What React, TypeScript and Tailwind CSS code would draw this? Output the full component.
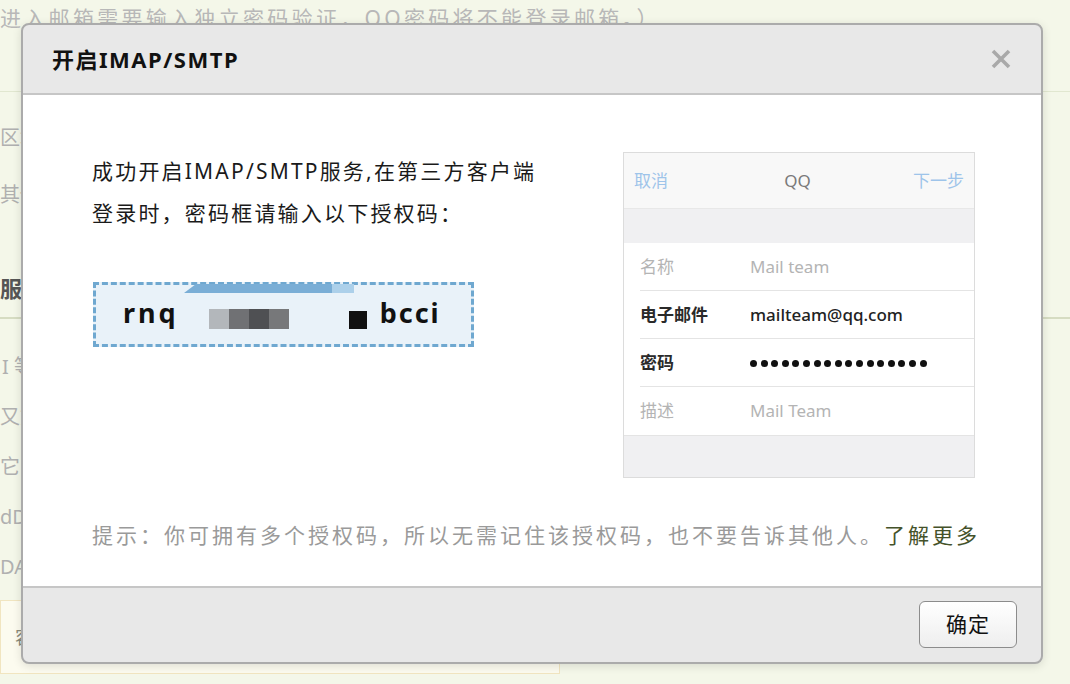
const font = "font-['Noto_Sans','Noto_Sans_CJK_SC',sans-serif]";

const rows = [
  { label: '名称', value: 'Mail team', strong: false },
  { label: '电子邮件', value: 'mailteam@qq.com', strong: true },
  { label: '密码', value: '', strong: true },
  { label: '描述', value: 'Mail Team', strong: false },
];

function PhonePreview() {
  return (
    <div className="mt-[2px] w-[352px] h-[326px] border border-[#dcdcdc] bg-[#f0f0f2] flex flex-col text-[17px]">
      {/* top bar */}
      <div className="h-[56px] bg-[#f8f8f8] border-b border-[#e8e8e8] flex items-center justify-between px-[10px]">
        <span className="text-[#9ec4ea]">取消</span>
        <span className="text-[#7a7a7a] pl-[14px]">QQ</span>
        <span className="text-[#9ec4ea]">下一步</span>
      </div>
      <div className="h-[34px]" />
      <div className="bg-white pl-[16px]">
        {rows.map((r, i) => (
          <div
            key={r.label}
            className={`h-[48px] flex items-center ${i < rows.length - 1 ? 'border-b border-[#e4e4e4]' : ''}`}
          >
            <span className={`w-[110px] ${r.strong ? 'text-[#2a2a2a] font-semibold' : 'text-[#b4b4b4]'}`}>
              {r.label}
            </span>
            {r.label === '密码' ? (
              <div className="flex gap-[3.6px] mt-[2px]">
                {Array.from({ length: 17 }).map((_, k) => (
                  <div key={k} className="w-[7px] h-[7px] rounded-full bg-[#111]" />
                ))}
              </div>
            ) : (
              <span className={r.strong ? 'text-[#222] font-medium' : 'text-[#b4b4b4]'}>{r.value}</span>
            )}
          </div>
        ))}
      </div>
      <div className="flex-1 border-t border-[#e4e4e4]" />
    </div>
  );
}

function CodeBox() {
  const blur = ['bg-[#b3b7bb]', 'bg-[#707174]', 'bg-[#4f5053]', 'bg-[#77787a]'];
  return (
    <div className="relative mt-[48px] ml-[1px] w-[381px] h-[65px] border-[3px] border-dashed border-[#6fa8d0] bg-[#e9f2f9] flex items-center pl-[27px]">
      {/* cut-off highlight strip along the top */}
      <div className="absolute top-[-1px] left-[88px] w-[150px] h-[9px] bg-[#7aaed6] [clip-path:polygon(8%_0,100%_0,100%_100%,0_100%)]" />
      <div className="absolute top-[-1px] left-[236px] w-[22px] h-[9px] bg-[#acd0ea]" />
      <span className="text-[27px] font-bold tracking-[3px] text-[#111] leading-none pb-[4px]">rnq</span>
      <div className="ml-[30px] mt-[8px] flex">
        {blur.map((c, i) => (
          <div key={i} className={`w-[20px] h-[20px] ${c}`} />
        ))}
      </div>
      <div className="ml-[60px] mt-[10px] w-[18px] h-[18px] bg-[#111]" />
      <span className="ml-[13px] text-[27px] font-bold tracking-[2px] text-[#111] leading-none pb-[4px]">bcci</span>
    </div>
  );
}

function Dialog() {
  return (
    <div className="absolute left-[21px] top-[23px] w-[1022px] h-[641px] border-2 border-[#ababab] rounded-[8px] overflow-hidden bg-[#e8e8e8] shadow-[0_2px_10px_rgba(0,0,0,0.12)] flex flex-col">
      {/* Header */}
      <div className="h-[70px] border-b-2 border-[#c6c6c6] flex items-center justify-between pl-[29px] pr-[29px]">
        <span className="text-[22px] font-bold tracking-[1.5px] text-[#111]">开启IMAP/SMTP</span>
        <svg width="20" height="20" viewBox="0 0 20 20" className="mr-[1px]">
          <path d="M2 2 L18 18 M18 2 L2 18" stroke="#a9a9a9" strokeWidth="3.6" strokeLinecap="butt" />
        </svg>
      </div>

      {/* Body */}
      <div className="h-[491px] bg-white pl-[69px] pr-[40px] pt-[55px]">
        <div className="flex justify-between pr-[26px]">
          <div>
            <p className="text-[21px] leading-[42px] tracking-[2.2px] text-[#1a1a1a]">
              成功开启IMAP/SMTP服务,在第三方客户端
              <br />
              登录时，密码框请输入以下授权码：
            </p>
            <CodeBox />
          </div>
          <PhonePreview />
        </div>
        <p className="mt-[41px] whitespace-nowrap text-[21px] leading-[32px] tracking-[3px] text-[#9a9a9a]">
          提示：你可拥有多个授权码，所以无需记住该授权码，也不要告诉其他人。
          <span className="text-[#44522a]">了解更多</span>
        </p>
      </div>

      {/* Footer */}
      <div className="flex-1 border-t-2 border-[#c6c6c6] flex justify-end items-start pt-[13px] pr-[24px]">
        <button className="w-[98px] h-[47px] rounded-[6px] border border-[#8c8c8c] bg-gradient-to-b from-white to-[#eeeeee] text-[21px] tracking-[1px] text-[#111]">
          确定
        </button>
      </div>
    </div>
  );
}

export default function App() {
  const side = [
    { t: '区域', mt: 'mt-[21px]', cls: 'text-[#b0b0b0]' },
    { t: '其他', mt: 'mt-[7px]', cls: 'text-[#b0b0b0]' },
    { t: '服务', mt: 'mt-[43px]', cls: 'text-[#555] font-bold text-[22px]' },
  ];
  const side2 = [
    { t: 'I 等', mt: 'mt-[23px]', cls: 'ml-[2px]' },
    { t: '又如', mt: 'mt-0', cls: '' },
    { t: '它的', mt: 'mt-0', cls: '' },
    { t: 'dD', mt: 'mt-0', cls: '' },
    { t: 'DA', mt: 'mt-0', cls: '' },
  ];
  return (
    <div className={`relative w-[1070px] h-[684px] overflow-hidden bg-[#f4f7e9] ${font}`}>
      {/* page behind the dialog */}
      <div className="h-[36px] leading-[36px] text-[21px] tracking-[3.3px] text-[#b8b8b8] whitespace-nowrap">
        进入邮箱需要输入独立密码验证，QQ密码将不能登录邮箱。）
      </div>
      <div className="mt-[55px] border-t border-[#e1e7d0]" />
      {side.map((s) => (
        <div key={s.t} className={`${s.mt} h-[50px] flex items-center text-[20px] whitespace-nowrap ${s.cls}`}>
          {s.t}
        </div>
      ))}
      <div className="mt-[4px] border-t-2 border-[#d6dcc2]" />
      {side2.map((s) => (
        <div
          key={s.t}
          className={`${s.mt} h-[50px] flex items-center text-[20px] text-[#b0b0b0] whitespace-nowrap ${s.cls}`}
        >
          {s.t}
        </div>
      ))}
      <div className="mt-[8px] w-[560px] h-[74px] border border-[#f1e5c0] bg-[#fcfbef] flex items-center pl-[14px] text-[18px] text-[#8a8a7a]">
        容
      </div>

      <Dialog />
    </div>
  );
}
